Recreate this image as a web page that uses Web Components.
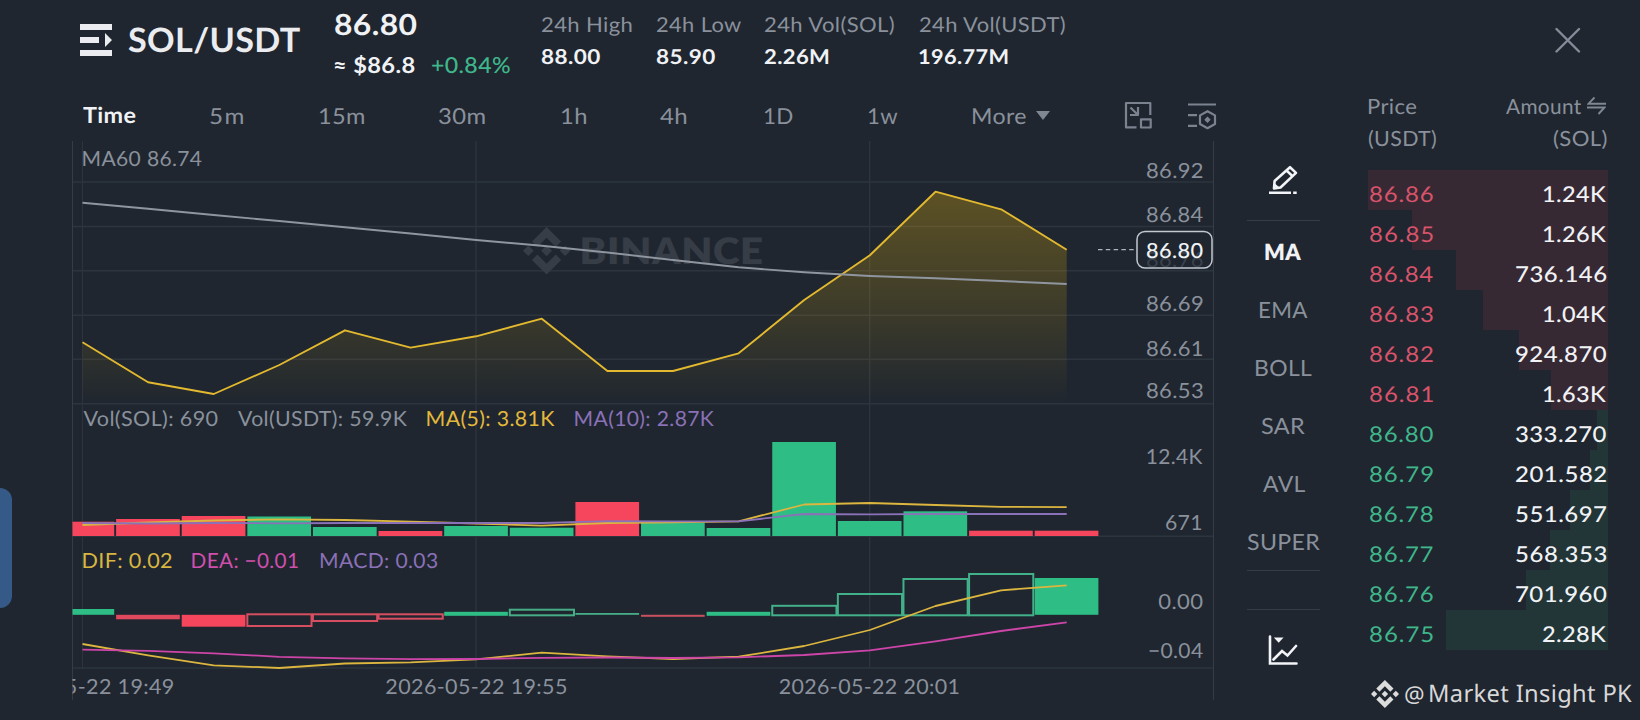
<!DOCTYPE html>
<html lang="en">
<head>
<meta charset="utf-8">
<title>SOL/USDT</title>
<style>
html,body{margin:0;height:100%;overflow:hidden;background:#1f262f}
body{font-family:Lato,"Liberation Sans",sans-serif;color:#eaecef}
</style>
</head>
<body>
<trade-app></trade-app>
<script>
const FONT = 'Lato, "Liberation Sans", sans-serif';
const C = {bg:'#1f262f', dim:'#8a919c', line:'#2d343e', white:'#f0f2f5', up:'#3fb68b', down:'#d9536b', gold:'#dcb63f', violet:'#8a71b8', pink:'#d04fae'};
const ctx = document.createElement('canvas').getContext('2d');
// Measures the ink box of a string and returns the stretch and tracking that make it span `width`.
function fit(text, size, weight, width, family = FONT) {
  ctx.font = `${weight} ${size * 10}px ${family}`;
  const m = ctx.measureText(text);
  const ink = (m.actualBoundingBoxLeft + m.actualBoundingBoxRight) / 10;
  const n = Math.max(1, text.length - 1);
  const k = Math.min(1.1, Math.max(.93, width / (ink + .35 * n)));
  return {k, shift: m.actualBoundingBoxLeft / 10, gap: (width / k - ink) / n};
}
function define(name, render) {
  customElements.define(name, class extends HTMLElement {
    connectedCallback() {
      if (!this.shadowRoot) this.attachShadow({mode: 'open'}).innerHTML = render(this);
    }
  });
}

/* Text that spans a given width: w, size, weight, line, color */
define('fit-text', el => {
  const a = (n, d) => el.getAttribute(n) || d;
  const text = a('text', ''), size = +a('size', 21), weight = a('weight', 400), w = +a('w', 50);
  const fam = a('family', '') ? a('family') + ', sans-serif' : FONT;
  const f = fit(text, size, weight, w, fam);
  return `<style>:host{display:block;flex:none;width:${w}px;height:${a('line', 30)}px;line-height:${a('line', 30)}px;color:${a('color', C.dim)}}
  span{display:block;width:max-content;white-space:pre;font:${weight} ${size}px/${a('line', 30)}px ${fam};letter-spacing:${f.gap.toFixed(3)}px;margin-left:${(f.shift * f.k).toFixed(2)}px;transform:scaleX(${f.k.toFixed(4)});transform-origin:0 0;text-rendering:geometricPrecision}</style><span>${text}</span>`;
});

const ft = (text, w, o = {}) => `<fit-text text="${text}" w="${w}" ${Object.entries(o).map(([k, v]) => `${k}="${v}"`).join(' ')}></fit-text>`;

define('stat-item', el => `<style>:host{display:block;padding-top:10px}</style>
  ${ft(el.getAttribute('label'), el.getAttribute('lw'), {size: 20.5, line: 31})}
  ${ft(el.getAttribute('value'), el.getAttribute('vw'), {size: 20.5, line: 33, weight: 700, color: C.white})}`);

define('pair-header', () => `<style>
  :host{display:flex;height:84px;padding:0 59px 0 80px;box-sizing:border-box}
  svg{display:block;flex:none}
  .menu{margin:24px 16.5px 0 0}
  .price{width:174.9px;margin:0 32.5px 0 34.6px}
  .sub{display:flex;justify-content:space-between}
  .stats{display:grid;grid-template-columns:114.5px 108px 155px 150px}
  .close{margin:27px 0 0 auto}
  </style>
  <svg class="menu" width="32" height="32" fill="#eaecef"><path d="M0 0h32v6H0zM0 13h19v6H0zM0 26h32v6H0zM25 9l7 7-7 7z"/></svg>
  ${ft('SOL/USDT', 171.5, {size: 33.5, weight: 700, line: 81, color: '#eaecef'})}
  <div class="price">${ft('86.80', 81.5, {size: 29, weight: 700, line: 50, color: C.white})}
    <div class="sub">${ft('≈ $86.8', 79.5, {size: 22, weight: 700, line: 30, color: C.white})}${ft('+0.84%', 77.5, {size: 22, weight: 500, line: 30, color: C.up})}</div></div>
  <div class="stats">
    <stat-item label="24h High" lw="89.5" value="88.00" vw="58"></stat-item>
    <stat-item label="24h Low" lw="84" value="85.90" vw="58"></stat-item>
    <stat-item label="24h Vol(SOL)" lw="129.5" value="2.26M" vw="63.5"></stat-item>
    <stat-item label="24h Vol(USDT)" lw="145.5" value="196.77M" vw="88"></stat-item>
  </div>
  <svg class="close" width="26" height="26" fill="none" stroke="#848c99" stroke-width="2.4" stroke-linecap="round"><path d="M1.500 2l22.500 22.500M24 2L1.500 24.500"/></svg>`);

define('interval-tabs', () => {
  const tabs = [['5m',210.5,243],['15m',319.5,363.5],['30m',438.5,484],['1h',561.5,585.5],['4h',660.5,686.5],['1D',764.5,792],['1w',868.5,897],['More',973,1025.5]];
  let end = 135.5;
  const html = tabs.map(([t, a, b]) => { const s = `<div style="margin-left:${a - end}px">${ft(t, b - a, {size: 22})}</div>`; end = b; return s; }).join('');
  return `<style>:host{display:flex;height:55px;padding:17px 0 0 83.5px;box-sizing:border-box;align-items:flex-start}
  svg{display:block;flex:none}.t{margin-top:-1px}.c{margin:10px 0 0 10px}.p{margin:0 0 0 74.5px}.s{margin:0 0 0 34.500px}</style>
  <div class="t">${ft('Time', 52, {size: 22, weight: 700, color: C.white})}</div>${html}
  <svg class="c" width="14" height="10" fill="#7f8793"><path d="M0 0h14L7 9z"/></svg>
  <svg class="p" width="29" height="29" fill="none" stroke="#7b8391" stroke-width="2.200" stroke-linejoin="round"><path d="M12.500 26.400H2V2h24.300v12"/><path d="M17 18.300h9.700v8.200H17z"/><path d="M6.500 6.500l7 7M14 6v8H6"/></svg>
  <svg class="s" width="29" height="29" fill="none" stroke="#7b8391" stroke-width="2.200" stroke-linejoin="round"><path d="M0 3.500h28M0 14.200h9M0 24.800h9M19.500 10.200l7.500 4.200v8.600l-7.500 4.200-7.500-4.200v-8.600z"/><path d="M19.500 15.500l3.200 3.200-3.200 3.200-3.200-3.200z" fill="#7b8391" stroke="none"/></svg>`;
});

const LOGO = '<path d="M38.200 53.200L62.800 28.600 87.400 53.200l14.300-14.300L62.800 0 23.900 38.900zM0 63.300L14.300 49l14.300 14.300-14.300 14.300zM38.200 73.400L62.800 98l24.600-24.600 14.300 14.300-38.900 38.900-38.900-38.900zM98 63.300L112.300 49l14.300 14.300-14.300 14.300zM77.300 63.300L62.800 48.800 48.300 63.300l14.500 14.500z"/>';

define('price-chart', () => {
  const X = i => 82.5 + i * 65.613;
  const price = [342.3,382.3,394,365,330.3,347.6,336.3,318.7,371,371,353.3,300,255.3,191.7,209.3,249.7];
  const ma60 = [202.7,208.7,215,221,227.2,233.5,240,245.7,252.5,260,267.3,272.3,276,278.3,281,284];
  const ma5 = [525,522.5,520.5,519.3,520,521.7,523.5,525.7,523,522.3,521.3,504.5,503,505,506.8,507.2];
  const ma10 = [523,523.5,523,523.3,523,523,523,523,521.2,521.3,521.3,514,514.3,514,514,514];
  const dif = [644,655.3,665.3,668,663.5,662.3,659.3,652.7,656.3,659,656.7,646,630,606,590.3,585.3];
  const dea = [649.7,650.8,653.3,656.8,658.3,659.2,659,657.8,657.5,658,657.3,655,650.3,641.3,631,622.3];
  const vol = [521.7,519,516,516.5,527,531,526,527.7,502,522.5,528,442,521,511.3,530.7,530.7];
  const red = '#f6465d', green = '#2ebd85';
  const rows = [182,226.5,270.7,315.3,359.3,403.7,536.3,668];
  const pts = a => a.map((y, i) => `${X(i).toFixed(1)},${y}`).join(' ');
  const line = (a, c, w = 1.9) => `<polyline points="${pts(a)}" fill="none" stroke="${c}" stroke-width="${w}" stroke-linejoin="round"/>`;
  const t = (s, a, b, y, color = C.dim, size = 20.8, weight = 400) => {
    const f = fit(s, size, weight, b - a);
    return `<text transform="translate(${(a + f.shift * f.k).toFixed(2)} ${y}) scale(${f.k.toFixed(4)} 1)" fill="${color}" font-size="${size}" font-weight="${weight}" letter-spacing="${f.gap.toFixed(3)}">${s}</text>`;
  };
  const bars = vol.map((y, i) => `<rect x="${X(i) - 32}" y="${y}" width="63.700" height="${536 - y}" fill="${'rrrggrggrgggggrr'[i] === 'r' ? red : green}"/>`).join('');
  // [index, top, bottom, colour, hollow]
  const macd = [[0,609,614.8,green],[1,614.8,619.3,'#e0485e'],[2,614.8,626.7,red],[3,614.3,626,'#d64e60',1],[4,614.3,621,'#d64e60',1],[5,614.3,618.7,'#d64e60',1],[6,611.8,615.8,green],[7,609.7,615.3,'#48ad87',1],[8,613,614.8,'#48ad87'],[9,614.8,616.8,'#c9505f'],[10,611.8,615.8,green],[11,605.8,615.3,'#42b088',1],[12,594,615.3,'#42b088',1],[13,579,615.3,'#42b088',1],[14,574,615.3,'#42b088',1],[15,578,614.8,green]]
    .map(([i, a, b, c, h]) => h ? `<rect x="${X(i) - 32}" y="${a}" width="64.200" height="${b - a}" fill="none" stroke="${c}" stroke-width="2"/>` : `<rect x="${X(i) - 32}" y="${a}" width="63.700" height="${b - a}" fill="${c}"/>`).join('');
  return `<style>:host{display:block;margin-left:72px;width:1144px;height:563px}svg{display:block;text-rendering:geometricPrecision;font-family:${FONT}}text{white-space:pre}</style>
  <svg width="1144" height="563" viewBox="72 139 1144 563">
  <defs><linearGradient id="g" x1="0" y1="190" x2="0" y2="404" gradientUnits="userSpaceOnUse"><stop offset="0" stop-color="#f0b90b" stop-opacity=".3"/><stop offset=".5" stop-color="#f0b90b" stop-opacity=".16"/><stop offset="1" stop-color="#f0b90b" stop-opacity="0"/></linearGradient>
  <clipPath id="c"><rect x="72.500" y="139" width="1142" height="563"/></clipPath></defs>
  <g stroke="${C.line}" stroke-width="1.400">${rows.map(y => `<path d="M72.500 ${y}H1213.500"/>`).join('')}
  <path d="M476 141V668M869.700 141V668"/><path d="M82.500 141V668" stroke-width="1"/><path d="M72.500 141V700M1213.500 141V700" stroke="#353c46" stroke-width="1"/></g>
  <g fill="#363d46"><svg x="523" y="227" width="47.500" height="47.500" viewBox="0 0 126.600 126.600">${LOGO}</svg>${t('BINANCE', 582, 762, 264, '#363d46', 36.5, 800)}</g>
  <polygon points="${pts(price)} ${X(15)},404 82.5,404" fill="url(#g)"/>
  ${line(price, '#e3b92f')}${line(ma60, '#9096a0')}
  <g clip-path="url(#c)">${bars}${macd}${t('2026-05-22 19:49', -6.7, 173, 693.7)}</g>
  ${line(ma5, C.gold, 1.8)}${line(ma10, C.violet, 1.8)}${line(dif, C.gold, 1.8)}${line(dea, '#cd45a8', 1.8)}
  ${t('MA60 86.74', 83.5, 201.5, 166)}
  ${t('86.92', 1147, 1202.5, 178)}${t('86.84', 1147, 1202.5, 222)}${t('86.76', 1147, 1202.5, 266.5, '#3b424c')}
  ${t('86.69', 1147, 1202.5, 311)}${t('86.61', 1147, 1202, 356)}${t('86.53', 1147, 1202.5, 398.300)}
  ${t('12.4K', 1147.5, 1202.5, 464)}${t('671', 1166, 1201, 530)}${t('0.00', 1159, 1202.5, 608.700)}${t('−0.04', 1149.5, 1202.5, 657.700)}
  <path d="M1098 249.700H1135" stroke="#aeb3bb" stroke-width="1.300" stroke-dasharray="4.500 3.300"/>
  <rect x="1137" y="231.500" width="75" height="36.500" rx="8" fill="none" stroke="#c4c9d0" stroke-width="1.500"/>
  ${t('86.80', 1147, 1202.5, 258, C.white, 20.8, 500)}
  ${t('Vol(SOL): 690', 83.5, 217.5, 425.7)}${t('Vol(USDT): 59.9K', 238, 407, 425.7)}${t('MA(5): 3.81K', 427.5, 554.5, 425.7, '#e3b93c')}${t('MA(10): 2.87K', 575.5, 714, 425.7, C.violet)}
  ${t('DIF: 0.02', 83.5, 171.5, 568, '#d9b641')}${t('DEA: −0.01', 192.5, 297.5, 568, C.pink)}${t('MACD: 0.03', 321, 437, 568, C.violet)}
  ${t('2026-05-22 19:55', 386.3, 566, 693.7)}${t('2026-05-22 20:01', 779.6, 958.5, 693.7)}
  </svg>`;
});

define('indicator-rail', () => {
  const items = [['MA',35.5],['EMA',47.5],['BOLL',55.5],['SAR',43],['AVL',42],['SUPER',72]];
  return `<style>:host{display:flex;flex-direction:column;align-items:center;width:73px;margin-left:31px;padding-top:80px;box-sizing:border-box}
  svg{display:block;margin-left:-2px}hr{width:73px;height:1px;border:0;margin:0;background:#353c47;flex:none}
  .l{display:flex;flex-direction:column;align-items:center;height:349px;padding-top:2px;box-sizing:border-box}</style>
  <svg width="30" height="31" style="margin-bottom:25px" fill="none" stroke="#f2f4f7" stroke-width="2.600" stroke-linejoin="round"><path d="M6 24.500l.6-7.500L22 3.200l6 5.700L12.500 23.500z"/><path d="M18.500 6.500l6 5.600"/><path d="M1 28.800h22M25.200 28.800h3.500"/><path d="M6 24.500l1.300-4.200 3.400 3z" fill="#f2f4f7" stroke-width="1"/></svg>
  <hr><div class="l">${items.map(([s, w], i) => ft(s, w, {size: 22.3, line: i ? 58 : 57.5, weight: i ? 400 : 800, color: i ? C.dim : C.white})).join('')}</div>
  <hr><hr style="margin-top:38px">
  <svg width="30" height="31" style="margin-top:25px" fill="none" stroke="#f2f4f7" stroke-width="2.600" stroke-linecap="round"><path d="M2 1.500V28.500H28.500M5.500 24.500l8.500-8.500 5.500 4.500 8.500-9.500"/><path d="M5.800 2.600h9.800l-4.900 5.200z" fill="#f2f4f7" stroke="none"/></svg>`;
});

define('order-row', el => {
  const a = n => el.getAttribute(n), up = a('side') === 'buy';
  return `<style>:host{display:flex;justify-content:space-between;height:40px;padding:9px 2px 0 2px;box-sizing:border-box;background:linear-gradient(${up ? '#223537,#223537' : '#372933,#372933'}) right/${a('depth')}px 100% no-repeat}</style>
  ${ft(a('price'), 62.5, {size: 21.8, color: up ? C.up : C.down})}${ft(a('amount'), a('aw'), {size: 21.8, color: C.white, weight: 500})}`;
});

define('order-book', () => {
  const rows = [['86.86','1.24K',240,62],['86.85','1.26K',196,62],['86.84','736.146',152,90],['86.83','1.04K',125.5,62],['86.82','924.870',89.5,90],['86.81','1.63K',57,62],['86.80','333.270',11,90],['86.79','201.582',18.5,90],['86.78','551.697',38,90],['86.77','568.353',58,90],['86.76','701.960',82.5,90],['86.75','2.28K',162,63]];
  return `<style>:host{display:block;width:240px;margin-left:48px;padding-top:8px;box-sizing:border-box}
  .h{display:flex;justify-content:space-between;height:32px;padding:0 1.500px 0 .5px}.a{display:flex;gap:7px}.r{margin-top:14px}
  .a svg{display:block;margin:4px 1px 0 -1px}
  .w{display:flex;align-items:center;gap:6.500px;margin:28px -30px 0 3px}.w fit-text{margin-top:-1px}</style>
  <div class="h">${ft('Price', 47)}<div class="a">${ft('Amount', 75)}<svg width="19" height="19" fill="none" stroke="#7f8793" stroke-width="1.900"><path d="M7.500 1.500L1.500 7.700H19M0 11.500h17.500L11.500 18"/></svg></div></div>
  <div class="h">${ft('(USDT)', 67)}${ft('(SOL)', 52.5)}</div>
  <div class="r">${rows.map(([p, q, d, w], i) => `<order-row side="${i < 6 ? 'sell' : 'buy'}" price="${p}" amount="${q}" depth="${d}" aw="${w}"></order-row>`).join('')}</div>
  <div class="w"><svg width="28" height="32" viewBox="0 -4 126.600 134.600" fill="#dcdcdc">${LOGO}</svg>${ft('@', 18.5, {size: 22, line: 32, family: "'Noto Sans'", color: '#d8d8d9'})}${ft('Market Insight PK', 201.5, {size: 24, line: 32, family: "'Noto Sans'", color: '#d8d8d9'})}</div>`;
});

define('trade-app', () => `<style>
  :host{display:block;width:1640px;height:720px;background:${C.bg};overflow:hidden;position:relative}
  main{display:flex}.left{width:1216px;flex:none}
  .handle{position:absolute;left:0;top:488px;width:12px;height:120px;border-radius:0 12px 12px 0;background:#365a88}</style>
  <pair-header></pair-header>
  <main><div class="left"><interval-tabs></interval-tabs><price-chart></price-chart></div><indicator-rail></indicator-rail><order-book></order-book></main>
  <div class="handle"></div>`);
</script>
</body>
</html>
